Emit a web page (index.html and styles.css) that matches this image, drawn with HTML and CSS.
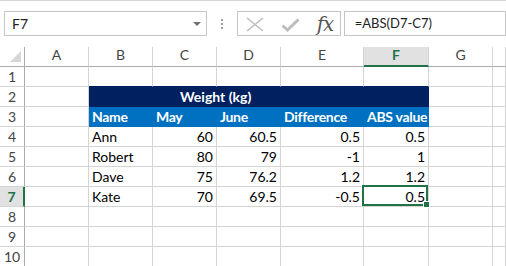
FILE: index.html
```html
<!DOCTYPE html>
<html lang="en">
<head>
    <meta charset="UTF-8">
    <meta name="viewport" content="width=device-width, initial-scale=1.0">
    <title>ABS value - Sheet</title>
    <link rel="stylesheet" href="styles.css">
</head>
<body>
    <!-- Formula bar -->
    <div class="formula-bar">
        <div class="name-box"><span>F7</span><span class="caret"></span></div>
        <div class="grip"><i></i><i></i><i></i></div>
        <div class="fx-buttons">
            <svg class="btn-cancel" width="18" height="15" viewBox="0 0 18 15">
                <path d="M1 1 L17 14 M17 1 L1 14" stroke="#bdbdbd" stroke-width="1.6" fill="none"/>
            </svg>
            <svg class="btn-enter" width="19" height="14" viewBox="0 0 19 14">
                <path d="M1.5 7.5 L6.5 12 L17.5 1.5" stroke="#bdbdbd" stroke-width="3" fill="none"/>
            </svg>
            <span class="fx">fx</span>
        </div>
        <div class="formula">=ABS(D7-C7)</div>
    </div>

    <!-- Worksheet grid -->
    <div class="sheet">
        <div class="c ch corner"><span class="tri"></span></div>
        <div class="c ch">A</div><div class="c ch">B</div><div class="c ch">C</div><div class="c ch">D</div>
        <div class="c ch">E</div><div class="c ch active">F</div><div class="c ch">G</div><div class="c ch"></div>

        <div class="c rh">1</div><div class="c"></div>
        <div class="c over-navy"></div><div class="c over-navy"></div><div class="c over-navy"></div><div class="c over-navy"></div><div class="c over-navy"></div>
        <div class="c"></div><div class="c"></div>

        <div class="c rh">2</div><div class="c"></div>
        <div class="c navy">Weight (kg)</div>
        <div class="c"></div><div class="c"></div>

        <div class="c rh">3</div><div class="c"></div>
        <div class="c blue">Name</div><div class="c blue">May</div><div class="c blue">June</div><div class="c blue">Difference</div><div class="c blue">ABS value</div>
        <div class="c"></div><div class="c"></div>

        <div class="c rh">4</div><div class="c"></div>
        <div class="c">Ann</div><div class="c n">60</div><div class="c n">60.5</div><div class="c n">0.5</div><div class="c n">0.5</div>
        <div class="c"></div><div class="c"></div>

        <div class="c rh">5</div><div class="c"></div>
        <div class="c">Robert</div><div class="c n">80</div><div class="c n">79</div><div class="c n">-1</div><div class="c n">1</div>
        <div class="c"></div><div class="c"></div>

        <div class="c rh">6</div><div class="c"></div>
        <div class="c">Dave</div><div class="c n">75</div><div class="c n">76.2</div><div class="c n">1.2</div><div class="c n">1.2</div>
        <div class="c"></div><div class="c"></div>

        <div class="c rh active">7</div><div class="c"></div>
        <div class="c">Kate</div><div class="c n">70</div><div class="c n">69.5</div><div class="c n">-0.5</div><div class="c n sel">0.5</div>
        <div class="c"></div><div class="c"></div>

        <div class="c rh">8</div><div class="c"></div><div class="c"></div><div class="c"></div><div class="c"></div><div class="c"></div><div class="c"></div><div class="c"></div><div class="c"></div>
        <div class="c rh">9</div><div class="c"></div><div class="c"></div><div class="c"></div><div class="c"></div><div class="c"></div><div class="c"></div><div class="c"></div><div class="c"></div>
        <div class="c rh">10</div><div class="c"></div><div class="c"></div><div class="c"></div><div class="c"></div><div class="c"></div><div class="c"></div><div class="c"></div><div class="c"></div>
    </div>
</body>
</html>
```

FILE: styles.css
```css
body {
    margin: 0;
    width: 506px;
    height: 266px;
    overflow: hidden;
    background-color: #fff;
    color: #000;
    font-family: Lato, "Liberation Sans", sans-serif;
    font-size: 14px;
}

/* formula bar */
.formula-bar {
    height: 47px;
    box-sizing: border-box;
    border-top: 1px solid #d4d4d4;
    padding: 10px 0 0 4px;
    display: flex;
    align-items: flex-start;
}

.name-box {
    width: 213px;
    height: 25px;
    box-sizing: border-box;
    border: 1px solid #c6c6c6;
    padding: 0 5px 0 7px;
    display: flex;
    align-items: center;
    justify-content: space-between;
    font-size: 14px;
    color: #222;
}

.caret {
    width: 0;
    height: 0;
    border-left: 4px solid transparent;
    border-right: 4px solid transparent;
    border-top: 4px solid #6f6f6f;
}

.grip {
    width: 31px;
    padding-top: 8px;
    display: flex;
    flex-direction: column;
    align-items: center;
    gap: 2px;
}

.grip i {
    width: 2px;
    height: 2px;
    background-color: #9c9c9c;
}

.fx-buttons {
    width: 109px;
    height: 25px;
    box-sizing: border-box;
    border: 1px solid #c6c6c6;
    padding-left: 8px;
    display: flex;
    align-items: center;
    gap: 17px;
}

.btn-cancel {
    margin-top: 2px;
}

.btn-enter {
    margin-top: 3px;
}

.fx {
    font-family: "DejaVu Serif", "Liberation Serif", serif;
    font-style: italic;
    font-size: 20px;
    color: #555;
    letter-spacing: -1px;
    line-height: 20px;
}

.formula {
    width: 170px;
    height: 25px;
    margin-left: 3px;
    box-sizing: border-box;
    border: 1px solid #c6c6c6;
    padding-left: 10px;
    font-size: 13px;
    line-height: 23px;
    color: #222;
}

/* sheet */
.sheet {
    display: grid;
    grid-template-columns: 25px 64px 64px 64px 64px 83px 65px 64px 1fr;
    grid-auto-rows: 20px;
}

.c {
    box-sizing: border-box;
    border-right: 1px solid #d4d4d4;
    border-bottom: 1px solid #d4d4d4;
    padding: 0 3px;
    line-height: 19px;
    white-space: nowrap;
}

.n {
    text-align: right;
}

.ch {
    padding: 0;
    text-align: center;
    color: #444;
    line-height: 16px;
    border-bottom-color: #ababab;
}

.corner {
    border-right-color: #ababab;
    display: flex;
    justify-content: flex-end;
    align-items: flex-end;
    padding: 0 3px 4px 0;
}

.tri {
    width: 0;
    height: 0;
    border-left: 11px solid transparent;
    border-bottom: 11px solid #d6d6d6;
}

.rh {
    padding: 0;
    text-align: center;
    color: #444;
    border-right-color: #ababab;
}

.ch.active {
    background-color: #e1e1e1;
    border-bottom: 2px solid #217346;
    color: #217346;
    font-weight: bold;
}

.rh.active {
    background-color: #e1e1e1;
    border-right: 2px solid #217346;
    color: #217346;
    font-weight: bold;
}

.over-navy {
    border-bottom-color: #002060;
}

.navy {
    grid-column: span 5;
    background-color: #002060;
    border-color: #002060;
    color: #fff;
    font-weight: bold;
    padding-left: 91px;
}

.blue {
    background-color: #0070c0;
    border-color: #0070c0;
    color: #fff;
    font-weight: bold;
    letter-spacing: -0.3px;
    overflow: hidden;
}

/* active cell */
.sel {
    position: relative;
}

.sel::before {
    content: "";
    position: absolute;
    top: -2px;
    left: -2px;
    right: 0;
    bottom: 0;
    border: 2px solid #217346;
}

.sel::after {
    content: "";
    position: absolute;
    right: -2px;
    bottom: -2px;
    width: 7px;
    height: 7px;
    box-sizing: border-box;
    border: 1px solid #fff;
    background-color: #217346;
}
```
